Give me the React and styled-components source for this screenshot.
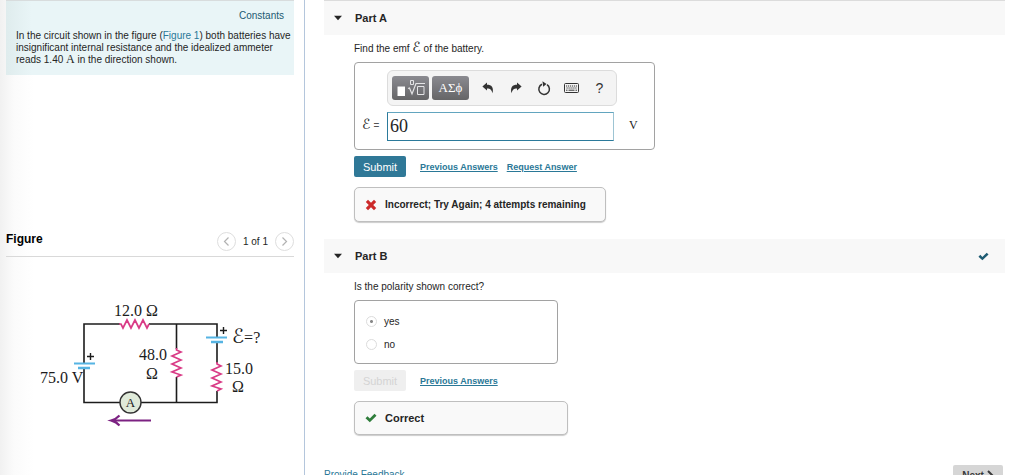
import React from "react";
import styled, { createGlobalStyle, css } from "styled-components";

const Global = createGlobalStyle`
  *, *::before, *::after { box-sizing: border-box; }
  body {
    margin: 0;
    background: #fff;
    color: #252525;
    font: 10px/12px "Liberation Sans", Arial, Helvetica, sans-serif;
  }
  p, h2, h3, fieldset, figure { margin: 0; }
  button, input { font-family: inherit; }
`;

const serif = css`font-family: "Liberation Serif", "Times New Roman", serif;`;

const Page = styled.div`
  display: grid;
  grid-template-columns: 305px minmax(0, 1fr);
  height: 100vh;
  overflow: hidden;
`;

const Sidebar = styled.aside`
  display: flex;
  flex-direction: column;
  padding: 0 10px 0 6px;
  border-right: 1px solid #b4c6dc;
  background: linear-gradient(90deg, #f1f1f1 0, #fbfbfb 14px, #fff 34px);
`;

const Problem = styled.section`
  min-height: 75px;
  padding: 9px 0 9px 10px;
  border-top: 1px solid #d8dcdd;
  background: linear-gradient(90deg, #dfeced 0, #e9f5f7 26px);
`;

const ConstantsRow = styled.div`
  display: flex;
  justify-content: flex-end;
  margin-bottom: 8px;
  padding-right: 10px;
`;

const Link = styled.a`
  color: ${(p) => (p.$dark ? "#1b5a72" : "#2a7897")};
  font-size: ${(p) => p.$size || 10}px;
  font-weight: ${(p) => (p.$bold ? 700 : 400)};
  text-decoration: ${(p) => (p.$bold ? "underline" : "none")};
`;

const Unit = styled.span`
  ${serif}
  font-size: 12px;
  line-height: 1px;
`;

const FigureBar = styled.div`
  display: flex;
  align-items: center;
  justify-content: space-between;
  margin-top: 152px;
  height: 30px;
  border-bottom: 1px solid #d9d9d9;
`;

const FigureTitle = styled.h2`
  padding-bottom: 6px;
  color: #000;
  font-size: 12px;
`;

const Pager = styled.div`
  display: flex;
  align-items: center;
  gap: 7px;
`;

const PagerButton = styled.button`
  display: grid;
  place-items: center;
  width: 19px;
  height: 19px;
  padding: 0;
  border: 1px solid #dedede;
  border-radius: 50%;
  background: #fff;
`;

const Circuit = styled.figure`
  padding: 43px 0 0 30px;
  svg { display: block; }
  text { font-family: "Liberation Serif", "Times New Roman", serif; font-size: 16px; fill: #1c1c1c; }
  .script { font-family: "DejaVu Serif", "DejaVu Sans", serif; font-style: italic; font-size: 20px; }
  .meter { font-size: 13px; }
`;

const Main = styled.main`
  padding: 0 19px;
`;

const PartHeader = styled.header`
  display: flex;
  align-items: center;
  gap: 12px;
  height: ${(p) => (p.$first ? 35 : 34)}px;
  padding: 0 16px 0 9px;
  border-top: ${(p) => (p.$first ? "1px solid #dcdcdc" : "0")};
  background: #f8f8f8;
`;

const Toggle = styled.button`
  display: flex;
  padding: 0;
  border: 0;
  background: none;
`;

const PartTitle = styled.h3`
  flex: 1;
  font-size: 11px;
`;

const PartBody = styled.div`
  display: flex;
  flex-direction: column;
  align-items: flex-start;
  padding: 8px 0 17px 30px;
`;

const Question = styled.p`
  margin-bottom: 7px;
`;

const AnswerBox = styled.div`
  display: flex;
  flex-direction: column;
  align-items: flex-start;
  gap: 6px;
  width: 301px;
  max-width: 100%;
  padding: 7px 7px 8px;
  border: 1px solid #a2a2a2;
  border-radius: 4px;
`;

const Toolbar = styled.div`
  display: flex;
  align-items: center;
  gap: 3px;
  width: 230px;
  height: 36px;
  margin-left: 25px;
  padding: 0 4px;
  border: 1px solid #dcdcdc;
  border-radius: 6px;
  background: #f4f4f4;
`;

const PaletteButton = styled.button`
  ${serif}
  display: grid;
  place-items: center;
  width: 37px;
  height: 24px;
  padding: 0;
  border: 0;
  border-radius: 3px;
  background: linear-gradient(#8a8a90, #656567);
  color: #fff;
  font-size: 13px;
`;

const ToolGroup = styled.div`
  display: flex;
  gap: 3px;
  padding-left: 3px;
`;

const ToolButton = styled.button`
  display: grid;
  place-items: center;
  width: 25px;
  height: 24px;
  padding: 0;
  border: 0;
  background: none;
  color: #333;
  font-size: 14px;
`;

const AnswerRow = styled.div`
  display: flex;
  align-items: center;
`;

const ScriptE = styled.span`
  font-family: "DejaVu Serif", "DejaVu Sans", serif;
  font-style: italic;
  font-size: 14px;
  line-height: 1px;
`;

const AnswerLabel = styled.label`
  display: flex;
  align-items: baseline;
  gap: 3px;
  width: 25px;
  padding-bottom: 2px;
  color: #555;
  ${ScriptE} { color: #252525; }
`;

const AnswerInput = styled.input`
  width: 227px;
  height: 29px;
  padding: 0 2px;
  border: 1px solid #2b7a9b;
  border-top-color: #62a5bf;
  border-right-color: #9dc4d3;
  background: #fff;
  color: #252525;
  font-family: "Liberation Serif", "Times New Roman", serif;
  font-size: 18px;
`;

const AnswerUnit = styled(Unit)`
  margin-left: 15px;
  padding-bottom: 2px;
`;

const Actions = styled.div`
  display: flex;
  align-items: center;
  gap: 9px;
  margin: 6px 0 10px;
`;

const Submit = styled.button`
  width: 52px;
  height: 21px;
  margin-right: 5px;
  padding: 0;
  border: 0;
  border-radius: 2px;
  background: #2f7897;
  color: #fff;
  font-size: 11px;
  &:disabled { background: #efefef; color: #d4d4d4; }
`;

const Feedback = styled.div`
  display: flex;
  align-items: center;
  gap: 8px;
  min-width: ${(p) => (p.$correct ? 214 : 252)}px;
  height: ${(p) => (p.$correct ? 34 : 35)}px;
  padding: 0 10px;
  border: 1px solid #bfbfbf;
  border-radius: 5px;
  background: #f9f9f9;
  box-shadow: 0 1px 1px #ccc;
  font-size: ${(p) => (p.$correct ? 11 : 10)}px;
  font-weight: 700;
`;

const Choices = styled.fieldset`
  display: flex;
  flex-direction: column;
  gap: 10px;
  width: 204px;
  height: 64px;
  padding: 14px 11px 0;
  border: 1px solid #a2a2a2;
  border-radius: 4px;
`;

const Choice = styled.label`
  display: flex;
  align-items: center;
  gap: 7px;
  line-height: 13px;
`;

const Radio = styled.input`
  appearance: none;
  width: 11px;
  height: 11px;
  margin: 0;
  border: 1px solid #dcdcdc;
  border-radius: 50%;
  background: #fff;
  &:checked { background: radial-gradient(circle, #888 0 1px, #fff 2px); }
`;

const Footer = styled.footer`
  display: flex;
  align-items: flex-start;
  justify-content: space-between;
  padding: 13px 2px 0 0;
`;

const FeedbackLink = styled(Link)`
  padding-top: 4px;
`;

const Next = styled.button`
  display: flex;
  align-items: center;
  justify-content: center;
  gap: 3px;
  width: 50px;
  height: 20px;
  padding: 0;
  border: 0;
  border-radius: 2px;
  background: #d6d6d6;
  color: #3a3a3a;
  font-size: 10px;
  font-weight: 700;
`;

const Chevron = ({ right }) => (
  <svg width="9" height="11" viewBox="0 0 9 11" fill="none" stroke="#b2b2b2" strokeWidth="1.2">
    <path d={right ? "M2.5 1.5 6.5 5.5 2.5 9.5" : "M6.5 1.5 2.5 5.5 6.5 9.5"} />
  </svg>
);

const Check = ({ color, size = 11 }) => (
  <svg width={size} height={size} viewBox="0 0 12 12" fill={color}>
    <path d="M0.5 6.2 2.5 4.2 4.8 6.5 9.5 1.8 11.5 3.7 4.8 10.2Z" />
  </svg>
);

const Cross = () => (
  <svg width="12" height="12" viewBox="0 0 12 12" fill="#cc2a2a">
    <path d="M3 0.8 6 3.8 9 0.8 11.2 3 8.2 6 11.2 9 9 11.2 6 8.2 3 11.2 0.8 9 3.8 6 0.8 3Z" />
  </svg>
);

const Caret = () => (
  <svg width="10" height="6" viewBox="0 0 10 6"><path d="M1 .8H9L5 5.2Z" fill="#252525" /></svg>
);

const RootIcon = () => (
  <svg width="30" height="18" viewBox="0 0 30 18" fill="none" stroke="#e4e4e6">
    <path d="M1.5 7.5H9V17H1.5Z" fill="#fff" stroke="none" />
    <path d="M14.5 1.5H17.5V5.5H14.5Z" />
    <path d="M12 9.5 13.5 9 16 15 20 4.5H29" strokeWidth="1.2" />
    <path d="M21.5 7.5H28V15.5H21.5Z" />
  </svg>
);

const TurnArrow = ({ flip }) => (
  <svg width="12" height="12" viewBox="0 0 12 12" fill="#333">
    <g transform={flip ? "translate(12 0) scale(-1 1)" : undefined}>
      <path d="M.4 4.4 5 .4V2.700C9.500 2.700 12 5.200 10.500 11.200 9.500 7.800 8.300 6.400 5 6.400V8.600Z" />
    </g>
  </svg>
);

const ResetIcon = () => (
  <svg width="14" height="15" viewBox="0 0 14 15" fill="none" stroke="#333" strokeWidth="1.5">
    <path d="M10 3.700A5.300 5.300 0 1 1 5 3.300" />
    <path d="M5.500 .2 9.500 2.900 6.200 5.800Z" fill="#333" stroke="none" />
  </svg>
);

const KeyboardIcon = () => (
  <svg width="15" height="10" viewBox="0 0 15 10" fill="none" stroke="#333">
    <rect x=".5" y=".5" width="14" height="9" rx="1" />
    <path d="M2 3H13M2.500 5H13" strokeDasharray="1.2 .8" />
    <path d="M2 7.200H3.500M4.500 7.200H10.500M11.500 7.200H13" />
  </svg>
);

const CircuitDrawing = () => (
  <svg width="240" height="128" viewBox="36 300 240 128" role="img" aria-label="Circuit diagram" fill="none">
    <g stroke="#1c1c1c" strokeWidth="1.6">
      <path d="M120 324H84V363M84 369V402.500H217V391M149 324H217V337M217 343V363M176.500 324V349M176.500 377V402.500" />
    </g>
    <g stroke="#d93b86" strokeWidth="1.7" strokeLinejoin="miter">
      <path d="M119 324 121 324 123 328 127 320 131 328 135 320 139 328 143 320 147 328 149 324" />
      <path d="M176.500 348V350L181 352 172 356 181 360 172 364 181 368 172 372 181 375 176.500 377" />
      <path d="M217 362V364L221 366 212 370 221 374 212 378 221 382 212 386 221 389 217 391" />
    </g>
    <g stroke="#56b4e3" strokeWidth="2">
      <path d="M74 363.500H95M206 337.500H227" />
      <path d="M78 368H90M211 342H223" strokeWidth="2.6" />
    </g>
    <path d="M87 356.500H94M90.500 353V360M220 330.500H227M223.500 327V334" stroke="#1c1c1c" strokeWidth="1.4" />
    <circle cx="130.500" cy="402.500" r="10.500" fill="#dfead9" stroke="#333" strokeWidth="1.4" />
    <path d="M151 420.500H112M119.500 415.500Q116.500 419 111 420.500Q116.500 422 119.500 425.500" stroke="#7c2282" strokeWidth="2" />
    <text x="114" y="316">12.0 Ω</text>
    <text x="139" y="360">48.0</text>
    <text x="146" y="379">Ω</text>
    <text x="40" y="383">75.0 V</text>
    <text x="225" y="374">15.0</text>
    <text x="232" y="392">Ω</text>
    <text x="232" y="343"><tspan className="script">ℰ</tspan>=?</text>
    <text className="meter" x="130.500" y="407" textAnchor="middle">A</text>
  </svg>
);

export default function App() {
  return (
    <>
      <Global />
      <Page>
        <Sidebar>
          <Problem>
            <ConstantsRow><Link href="#constants" $dark>Constants</Link></ConstantsRow>
            <p>
              In the circuit shown in the figure (<Link href="#figure">Figure 1</Link>) both batteries have
              insignificant internal resistance and the idealized ammeter reads 1.40 <Unit>A</Unit> in the direction shown.
            </p>
          </Problem>
          <FigureBar id="figure">
            <FigureTitle>Figure</FigureTitle>
            <Pager>
              <PagerButton aria-label="Previous figure"><Chevron /></PagerButton>
              <span>1 of 1</span>
              <PagerButton aria-label="Next figure"><Chevron right /></PagerButton>
            </Pager>
          </FigureBar>
          <Circuit><CircuitDrawing /></Circuit>
        </Sidebar>

        <Main>
          <section>
            <PartHeader $first>
              <Toggle aria-label="Collapse Part A"><Caret /></Toggle>
              <PartTitle>Part A</PartTitle>
            </PartHeader>
            <PartBody>
              <Question>Find the emf <ScriptE>ℰ</ScriptE> of the battery.</Question>
              <AnswerBox>
                <Toolbar>
                  <PaletteButton aria-label="Templates"><RootIcon /></PaletteButton>
                  <PaletteButton aria-label="Symbols">ΑΣϕ</PaletteButton>
                  <ToolGroup>
                    <ToolButton aria-label="Undo"><TurnArrow /></ToolButton>
                    <ToolButton aria-label="Redo"><TurnArrow flip /></ToolButton>
                    <ToolButton aria-label="Reset"><ResetIcon /></ToolButton>
                    <ToolButton aria-label="Keyboard shortcuts"><KeyboardIcon /></ToolButton>
                    <ToolButton aria-label="Help">?</ToolButton>
                  </ToolGroup>
                </Toolbar>
                <AnswerRow>
                  <AnswerLabel htmlFor="emf"><ScriptE>ℰ</ScriptE> =</AnswerLabel>
                  <AnswerInput id="emf" type="text" defaultValue="60" />
                  <AnswerUnit>V</AnswerUnit>
                </AnswerRow>
              </AnswerBox>
              <Actions>
                <Submit>Submit</Submit>
                <Link href="#previous-a" $bold $size={9}>Previous Answers</Link>
                <Link href="#request" $bold $size={9}>Request Answer</Link>
              </Actions>
              <Feedback><Cross />Incorrect; Try Again; 4 attempts remaining</Feedback>
            </PartBody>
          </section>

          <section>
            <PartHeader>
              <Toggle aria-label="Collapse Part B"><Caret /></Toggle>
              <PartTitle>Part B</PartTitle>
              <Check color="#1f5c73" />
            </PartHeader>
            <PartBody>
              <Question>Is the polarity shown correct?</Question>
              <Choices disabled aria-label="Polarity">
                <Choice><Radio type="radio" name="polarity" defaultChecked />yes</Choice>
                <Choice><Radio type="radio" name="polarity" />no</Choice>
              </Choices>
              <Actions>
                <Submit disabled>Submit</Submit>
                <Link href="#previous-b" $bold $size={9}>Previous Answers</Link>
              </Actions>
              <Feedback $correct><Check color="#2f7d3b" size={12} />Correct</Feedback>
            </PartBody>
          </section>

          <Footer>
            <FeedbackLink href="#feedback">Provide Feedback</FeedbackLink>
            <Next>Next
              <svg width="7" height="10" viewBox="0 0 7 10" fill="none" stroke="#3a3a3a" strokeWidth="2"><path d="M1 1 5 5 1 9" /></svg>
            </Next>
          </Footer>
        </Main>
      </Page>
    </>
  );
}
